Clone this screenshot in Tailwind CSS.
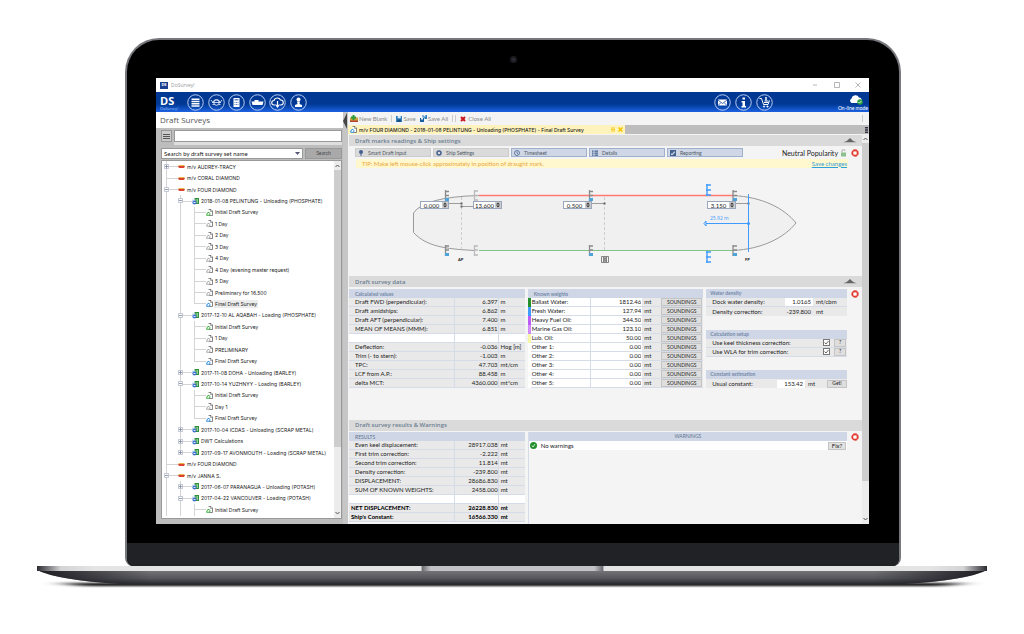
<!DOCTYPE html>
<html lang="en">
<head>
    <meta charset="UTF-8">
    <meta name="viewport" content="width=device-width, initial-scale=1.0">
    <title>DoSurvey!</title>
    <script src="https://cdn.jsdelivr.net/npm/@tailwindcss/browser@4"></script>
</head>
<body class="min-h-screen bg-white pt-[38px] pr-9 pl-[37px] font-['Lato','Noto_Sans',sans-serif] text-[5px] leading-[8px] text-[#222]">
    <!-- Shared icons -->
    <svg class="hidden">
        <symbol id="i-ship" viewBox="0 0 14 14">
            <path d="M1 4h12v3H1z" fill="#e9b44c" /><path d="M0 6h14l-2 4H2z" fill="#d9432f" />
        </symbol>
        <symbol id="i-set" viewBox="0 0 14 14">
            <path d="M5 0h9v12H5z" fill="#2f8f3a" /><path d="M9 2h3v8H9z" fill="#8fd08f" />
            <path d="M0 3h7v8H0z" fill="#c9dcf5" /><circle cx="5" cy="9" r="4" fill="#3d6fc9" /><path d="M3 8h4v2H3z" fill="#dfe9fa" />
        </symbol>
        <symbol id="i-doc" viewBox="0 0 14 14">
            <path d="M5 1h5l3 3v9H6" fill="#fff" stroke="#555" stroke-width="1.4" /><path d="M9 1v4h4" fill="none" stroke="#555" />
            <path d="M1 12.500l2-5 3-1 2 3-1 3z" fill="#fff" stroke="currentColor" stroke-width="2" />
        </symbol>
        <symbol id="i-ring" viewBox="0 0 16 16">
            <circle cx="8" cy="8" r="5.500" fill="#fff" stroke="#e23b30" stroke-width="3.600" />
            <path d="M2 2l3 3M14 2l-3 3M2 14l3-3M14 14l-3-3" stroke="#f6b5b0" stroke-width="1.500" />
        </symbol>
        <symbol id="i-disk" viewBox="0 0 14 14">
            <path d="M0 0h14v14H0z" fill="#2f7fc1" /><path d="M4 0h7v5H4z" fill="#dcebf7" /><path d="M3 8h8v6H3z" fill="#17507f" />
        </symbol>
        <symbol id="i-up" viewBox="0 0 16 6"><path d="M0 5q5-1 8-5q3 4 8 5z" fill="#666" /></symbol>
    </svg>

    <!-- Laptop lid -->
    <div class="mr-[87px] ml-[88px] overflow-hidden rounded-t-[34px] rounded-b-lg border-2 border-b-0 border-[#77787c] bg-black">
        <div class="flex h-[38px] items-center justify-center">
            <span class="size-[7px] rounded-full border-2 border-[#1c1c20] bg-[#2c2f38]"></span>
        </div>

        <div class="mr-[30px] ml-[29px] flex aspect-[8/5] flex-col overflow-hidden bg-[#f4f4f4]">
            <!-- Title bar -->
            <div class="flex h-[14px] shrink-0 items-center gap-[3px] bg-white px-1 font-['Open_Sans',sans-serif] text-[5px] text-[#999]">
                <span class="grid h-[7px] w-2 place-items-center bg-[#1c3f8f] text-[4px] leading-none font-bold text-white">DS</span>
                DoSurvey!
                <div class="ml-auto flex w-[53px] justify-between pr-1">
                    <svg class="size-[6px]" viewBox="0 0 6 6" stroke="#999" stroke-width=".7"><path d="M1 3h4" /></svg>
                    <svg class="size-[6px]" viewBox="0 0 6 6" fill="none" stroke="#999" stroke-width=".7"><path d="M.5.5h5v5h-5z" /></svg>
                    <svg class="size-[6px]" viewBox="0 0 6 6" stroke="#999" stroke-width=".7"><path d="M.5.5l5 5M5.500 .5l-5 5" /></svg>
                </div>
            </div>

            <!-- Main toolbar -->
            <header class="flex h-5 shrink-0 items-center bg-linear-to-b from-[#003894] from-60% to-[#1d62e2] pl-1 text-white">
                <div class="w-[27px]">
                    <div class="font-['Open_Sans',sans-serif] text-[11px] leading-[13px] font-bold">DS</div>
                    <div class="text-[4px] leading-[4px] text-[#8fb4f5]">DoSurvey!</div>
                </div>
                <nav class="flex w-[120px] justify-between">
                    <button aria-label="Menu"><svg class="size-[17px]" viewBox="0 0 34 34" fill="none" stroke="#fff"><circle cx="17" cy="17" r="15.500" stroke="#b9cdf2" stroke-width="2" /><path d="M9 10.500h16M9 15h16M9 19.500h16M9 24h16" stroke-width="2.600" /></svg></button>
                    <button aria-label="Draft"><svg class="size-[17px]" viewBox="0 0 34 34" fill="none" stroke="#dfe8fa"><circle cx="17" cy="17" r="15.500" stroke="#b9cdf2" stroke-width="2" /><circle cx="17" cy="17" r="5.500" stroke-width="2" /><path d="M6 12l4 5 3-5h8l3 5 4-5M8 17h18M9 21h3M22 21h3" stroke-width="1.700" /></svg></button>
                    <button aria-label="Calculator"><svg class="size-[17px]" viewBox="0 0 34 34"><circle cx="17" cy="17" r="15.500" fill="none" stroke="#b9cdf2" stroke-width="2" /><path d="M11 8h12v18H11z" fill="#fff" /><path d="M13 10h8v3h-8zM13 16h2v2h-2zM16 16h2v2h-2zM19 16h2v2h-2zM13 20h2v2h-2zM16 20h2v2h-2zM19 20h2v2h-2z" fill="#6a8cc9" /></svg></button>
                    <button aria-label="Vessels"><svg class="size-[17px]" viewBox="0 0 34 34"><circle cx="17" cy="17" r="15.500" fill="none" stroke="#b9cdf2" stroke-width="2" /><path d="M5 15h6v-3h8v3h10l-2 7H7z" fill="#fff" /></svg></button>
                    <button aria-label="Cloud"><svg class="size-[17px]" viewBox="0 0 34 34" fill="none" stroke="#fff"><circle cx="17" cy="17" r="15.500" stroke="#b9cdf2" stroke-width="2" /><path d="M12 22h-2a4.500 4.500 0 010-9 7 7 0 0113-1 5 5 0 011 10h-2" stroke-width="2.200" /><path d="M17 14v11M13 21l4 5 4-5" stroke-width="2.400" /></svg></button>
                    <button aria-label="User"><svg class="size-[17px]" viewBox="0 0 34 34"><circle cx="17" cy="17" r="15.500" fill="none" stroke="#b9cdf2" stroke-width="2" /><circle cx="17" cy="11" r="4" fill="#fff" /><path d="M14 15h6l-1 5 5 2v4H10v-4l5-2z" fill="#fff" /></svg></button>
                </nav>
                <div class="ml-auto flex w-[59px] justify-between">
                    <button aria-label="Mail"><svg class="size-[17px]" viewBox="0 0 34 34"><circle cx="17" cy="17" r="15.500" fill="none" stroke="#b9cdf2" stroke-width="2" /><path d="M8 11h18v12H8z" fill="#fff" /><path d="M8 12l9 7 9-7M8 23l6-6M26 23l-6-6" fill="none" stroke="#0c3f9f" stroke-width="1.500" /></svg></button>
                    <button aria-label="Info"><svg class="size-[17px]" viewBox="0 0 34 34"><circle cx="17" cy="17" r="15.500" fill="none" stroke="#b9cdf2" stroke-width="2" /><path d="M15 7h5v4h-5zM13 14h7v10h2v3h-9v-3h2v-7h-2z" fill="#fff" /></svg></button>
                    <button aria-label="Cart"><svg class="size-[17px]" viewBox="0 0 34 34" fill="none" stroke="#fff"><circle cx="17" cy="17" r="15.500" stroke="#b9cdf2" stroke-width="2" /><path d="M7 9h4l4 12h9l3-8M17 14h8M16 17h9" stroke-width="2" /><path d="M20 6v7" stroke-width="3" /><circle cx="16" cy="25" r="1.500" fill="#fff" /><circle cx="23" cy="25" r="1.500" fill="#fff" /></svg></button>
                </div>
                <div class="ml-[60px] flex w-9 flex-col items-end pt-px pr-px">
                    <svg class="mr-[5px] h-[10px] w-[14px]" viewBox="0 0 28 20"><path d="M5 16a5 5 0 010-9 8 8 0 0115-2 6 6 0 013 11z" fill="#fff" /><circle cx="22" cy="14" r="5.500" fill="#2ea043" /><path d="M19 14l2 2 4-4" fill="none" stroke="#fff" stroke-width="1.500" /></svg>
                    <span class="leading-[6px] whitespace-nowrap">On-line mode</span>
                </div>
            </header>

            <div class="flex min-h-0 flex-1">
                <!-- Draft surveys -->
                <aside class="flex w-[187px] shrink-0 flex-col bg-[#bdbdbd]">
                    <h2 class="h-4 shrink-0 bg-white pl-1 font-['Open_Sans',sans-serif] text-[8px] leading-4 text-[#555]">Draft Surveys</h2>
                    <div class="flex min-h-0 flex-1 flex-col pt-[2px] pr-px pb-[5px] pl-[5px]">
                        <div class="flex gap-[2px]">
                            <button aria-label="Filter" class="grid h-3 w-[11px] place-items-center border border-[#999] bg-[#ccc]">
                                <svg class="size-[7px]" viewBox="0 0 7 7" stroke="#555"><path d="M0 1.500h7M0 3.500h7M0 5.500h7" stroke-width="1.100" /></svg>
                            </button>
                            <div class="flex-1">
                                <input type="text" aria-label="Filter text" class="block h-3 w-full border border-[#999] bg-white px-1">
                                <div class="h-[3px] bg-[#dedede]"></div>
                            </div>
                        </div>
                        <div class="mt-[3px] flex gap-[2px]">
                            <div class="relative flex-1">
                                <select aria-label="Search by" class="block h-[11px] w-full appearance-none border border-[#999] bg-white pl-[2px] text-[6px] leading-[9px] text-[#222]">
                                    <option>Search by draft survey set name</option>
                                </select>
                                <svg class="absolute top-1 right-[3px] h-[3px] w-[5px]" viewBox="0 0 5 3"><path d="M0 0h5L2.500 3z" fill="#557" /></svg>
                            </div>
                            <button class="h-[11px] w-[37px] border border-[#999] bg-[#a9a9a9] leading-none text-[#444]">Search</button>
                        </div>
                        <div class="mt-px flex min-h-0 flex-1 border border-[#999] bg-white">
                            <div id="tree" class="flex flex-1 flex-col overflow-hidden pb-[2px] pl-1 font-['Inter',sans-serif] whitespace-nowrap"></div>
                            <div class="flex w-[7px] flex-col items-center bg-[#ececec]">
                                <svg class="h-[9px] w-[5px]" viewBox="0 0 5 9" fill="none" stroke="#555"><path d="M.5 6l2-2 2 2" /></svg>
                                <div class="h-[277px] w-full bg-[#cdcdcd]"></div>
                                <svg class="mt-auto h-[9px] w-[5px]" viewBox="0 0 5 9" fill="none" stroke="#555"><path d="M.5 3l2 2 2-2" /></svg>
                            </div>
                        </div>
                    </div>
                </aside>
                <div class="w-[5px] shrink-0 bg-[#c6c6c6]">
                    <svg class="h-[18px] w-[4px]" viewBox="0 0 4 18"><path d="M4 1v16L0 9z" fill="#444" /></svg>
                </div>

                <!-- Opened survey -->
                <main class="flex min-w-0 flex-1 flex-col">
                    <div class="flex h-[13px] shrink-0 items-center gap-1 pr-[6px] pl-[2px] text-[6px] text-[#8a8a8a]">
                        <button class="flex items-center gap-px"><svg class="h-[7px] w-2" viewBox="0 0 16 14"><path d="M0 5h16v9H0z" fill="#c9a23a" /><path d="M0 11h16v3H0z" fill="#b5402c" /><path d="M5 0h4v3h3v4H9v3H5V7H2V3h3z" fill="#2e9a3a" /></svg>New Blank</button>
                        <span class="h-[7px] w-px bg-[#ccc]"></span>
                        <button class="flex items-center gap-px"><svg class="size-[6px]"><use href="#i-disk" /></svg>Save</button>
                        <button class="flex items-center gap-px"><svg class="size-[7px]" viewBox="0 0 14 14"><path d="M5 0h9v8H9v-3H5z" fill="#2f7fc1" /><path d="M0 6h8v8H0z" fill="#17609f" /><path d="M2 6h4v3H2zM7 0h4v3H7z" fill="#e5f0fa" /></svg>Save All</button>
                        <span class="h-[7px] w-1 border-x border-[#ccc]"></span>
                        <button class="flex items-center gap-[2px]"><svg class="size-[6px]" viewBox="0 0 6 6"><path d="M1 1l4 4M5 1L1 5" stroke="#c8171e" stroke-width="2" /></svg>Close All</button>
                        <span class="ml-auto h-[7px] w-px bg-[#ccc]"></span>
                    </div>

                    <div class="flex h-[9px] shrink-0 items-center justify-between bg-[#bdbdbd] pr-px">
                        <div class="flex h-full w-[277px] items-center bg-[#fff3bd] pr-[2px] pl-[2px]">
                            <svg class="mr-[2px] size-[7px] text-[#2f8fe0]"><use href="#i-doc" /></svg>
                            <span class="font-['Inter',sans-serif] font-medium whitespace-nowrap">m/v FOUR DIAMOND - 2018-01-08 PELINTUNG - Unloading (PHOSPHATE) - Final Draft Survey</span>
                            <svg class="ml-auto h-[5px] w-3" viewBox="0 0 12 5" stroke="#f5c400"><path d="M0 1h4M0 2.500h4M0 4h4" stroke-width=".8" /><path d="M7.500 .5l4 4M11.500 .5l-4 4" stroke-width="1.500" /></svg>
                        </div>
                        <svg class="h-[6px] w-[3px]" viewBox="0 0 3 6" fill="#334"><path d="M0 0h3v1.500H0zM0 2.200h3v1.500H0zM0 4.400h3V6H0z" /></svg>
                    </div>

                    <div class="flex min-h-0 flex-1">
                        <div class="min-w-0 flex-1 overflow-hidden">
                            <section>
                                <h3 class="ml-px flex h-3 items-center justify-between border-t border-[#f4f4f4] bg-[#dadada] pr-1 pl-[6px] font-['Open_Sans',sans-serif] text-[6px] font-semibold text-[#6d7f92]">Draft marks readings &amp; Ship settings<svg class="h-[5px] w-4"><use href="#i-up" /></svg></h3>
                                <div class="mt-[2px] flex h-[9px] items-center gap-[2px] pr-[3px] pl-[7px] text-[#4d5763]">
                                    <button class="flex h-full w-[76px] items-center gap-1 border border-[#ccc] bg-[#dadada] pl-[2px]"><svg class="size-[6px]" viewBox="0 0 12 12" fill="#44608f"><circle cx="6" cy="4" r="4" /><path d="M5 7h2v5H5z" /></svg>Smart Draft Input</button>
                                    <button class="flex h-full w-[76px] items-center gap-1 border border-[#ccc] bg-[#dadada] pl-[2px]"><svg class="size-[6px]" viewBox="0 0 12 12"><circle cx="6" cy="6" r="4" fill="#dadada" stroke="#44608f" stroke-width="3" /></svg>Ship Settings</button>
                                    <button class="flex h-full w-[76px] items-center gap-1 border border-[#9fb0cd] bg-[#cfd7e6] pl-[2px]"><svg class="size-[6px]" viewBox="0 0 12 12" fill="none" stroke="#44608f" stroke-width="1.500"><circle cx="6" cy="6" r="5" /><path d="M6 3v3l2 2" /></svg>Timesheet</button>
                                    <button class="flex h-full w-[76px] items-center gap-1 border border-[#9fb0cd] bg-[#cfd7e6] pl-[2px]"><svg class="size-[6px]" viewBox="0 0 12 12" stroke="#44608f" stroke-width="2.500"><path d="M0 2h3M5 2h7M0 6h3M5 6h7M0 10h3M5 10h7" /></svg>Details</button>
                                    <button class="flex h-full w-[76px] items-center gap-1 border border-[#9fb0cd] bg-[#cfd7e6] pl-[2px]"><svg class="size-[6px]" viewBox="0 0 12 12"><path d="M0 0h12v12H0z" fill="#44608f" /><path d="M2 10V6l2 2 4-5h2v2L5 10z" fill="#cfd7e6" /></svg>Reporting</button>
                                    <span class="ml-auto text-[7px] whitespace-nowrap text-[#222]">Neutral Popularity</span>
                                    <svg class="h-2 w-[7px]" viewBox="0 0 14 16"><path d="M4 7V4a3 3 0 016 0" fill="none" stroke="#aaa" stroke-width="2" /><path d="M2 7h10v8H2z" fill="#8cc08c" /></svg>
                                    <svg class="ml-[2px] size-2"><use href="#i-ring" /></svg>
                                </div>
                                <div class="mt-[2px] mr-[14px] ml-2 flex h-[9px] items-center justify-between bg-[#fff8cf] pr-px pl-[6px] text-[6px] text-[#e9a63a]">
                                    TIP: Make left mouse-click approximately in position of draught mark.
                                    <a href="#" class="text-[#2f9fd8] underline">Save changes</a>
                                </div>

                                <!-- Ship plan -->
                                <div class="relative h-[108px]">
                                    <svg class="h-[108px] w-[514px]" viewBox="348 168 514 108" fill="none">
                                        <path d="M413.500 213Q424 197 479 195.500H733C762 197 784 208 796 223C784 238 762 249 733 250.500H475C444 249 426 246 413.500 232.500Z" fill="#f0f0f0" />
                                        <path d="M733 195.500C762 197 784 208 796 223C784 238 762 249 733 250.500M475 250.500C444 249 426 246 413.500 232.500V213Q424 197 479 195.500" stroke="#999" />
                                        <path d="M479 195.500H733" stroke="#ff7a72" stroke-width="1.500" /><path d="M479 250.500H733" stroke="#7fc486" stroke-width="1.200" />
                                        <path d="M461.500 197V250M604.500 197V250" stroke="#c4c4c4" stroke-width=".8" stroke-dasharray="3 2" />
                                        <g stroke="#888" stroke-width=".8"><path d="M448 203.500h13M461 206.500h13M592 203.500h12M735 203.500h13" /></g>
                                        <g fill="#666"><path d="M460.500 202.500h2v2h-2zM460.500 205.500h2v2h-2zM603.500 202.500h2v2h-2zM747.500 202.500h2v2h-2z" /></g>
                                        <g stroke="#8a8a8a"><path d="M445.500 190v11M445 191.500h4M445 195.500h4M589.500 190v11M589 191.500h4M589 195.500h4M733 190v11M733 191.500h4M733 195.500h4M445.500 245v11M445 246h4M445 250h4M589.500 245v11M589 246h4M589 250h4M733 245v11M733 246h4M733 250h4" stroke-width="1.300" /></g>
                                        <g stroke="#bbb"><path d="M474.500 190v11M474 191h4M474 195.500h4M474 200h4M474.500 245v11M474 246h4M474 250h4M474 255h4" stroke-width="1.300" /></g>
                                        <path d="M445 198h4v3h-4zM589 198h4v3h-4zM733 198h4v3h-4zM445 253h4v3h-4zM589 253h4v3h-4zM733 253h4v3h-4z" fill="#4ea3d8" />
                                        <g stroke="#3f9bff"><path d="M707 184v12M706 185h5M706 190h5M706 195h5M707 251v12M706 252h5M706 257h5M706 262h5" stroke-width="1.400" /><path d="M748.500 194v58M706 223.500h42M706 221l-2 2.500 2 2.500z" /></g>
                                        <circle cx="748.500" cy="223.500" r="1.500" fill="#3f9bff" />
                                        <path d="M601.500 256.500h7v6h-7zM603.500 257v5M606.500 257v5M604 257l2 5M606 257l-2 5" stroke="#555" stroke-width=".7" />
                                        <text x="710" y="220" font-size="5" fill="#3f9bff" class="font-['Open_Sans',sans-serif]">25.92 m</text>
                                        <text x="458" y="261" font-size="4" font-weight="bold" fill="#111">AP</text>
                                        <text x="745" y="261" font-size="4" font-weight="bold" fill="#111">FP</text>
                                    </svg>
                                    <div id="marks"></div>
                                </div>
                            </section>

                            <section>
                                <h3 class="ml-px flex h-[11px] items-center justify-between bg-[#dadada] pr-1 pl-[6px] font-['Open_Sans',sans-serif] text-[6px] font-semibold text-[#6d7f92]">Draft survey data<svg class="h-[5px] w-4"><use href="#i-up" /></svg></h3>
                                <div class="mt-[2px] flex gap-1 pr-[3px]">
                                    <div class="grid flex-1 grid-cols-[176fr_176fr_141fr] items-start gap-[3px] pl-px">
                                        <table class="w-full table-fixed border-separate border-spacing-0">
                                            <colgroup><col><col class="w-[44px]"><col class="w-[26px]"></colgroup>
                                            <thead><tr class="h-[9px]"><th colspan="3" class="bg-[#cfd6e6] pl-[6px] text-left font-bold text-[#7488a8]">Calculated values</th></tr></thead>
                                            <tbody id="calculated"></tbody>
                                        </table>
                                        <table class="w-full table-fixed border-separate border-spacing-0">
                                            <colgroup><col class="w-[3px]"><col><col class="w-[51px]"><col class="w-[18px]"><col class="w-[43px]"></colgroup>
                                            <thead><tr class="h-[9px]"><th colspan="5" class="bg-[#cfd6e6] pl-[6px] text-left font-bold text-[#7488a8]">Known weights</th></tr></thead>
                                            <tbody id="weights"></tbody>
                                        </table>
                                        <div class="flex h-[99px] flex-col justify-between">
                                            <div>
                                                <h4 class="h-[9px] bg-[#cfd6e6] pl-1 font-bold text-[#7488a8]">Water density</h4>
                                                <div class="flex h-[9px] items-center border-b border-[#d6dbe8] bg-[#e9e9e9] pl-[6px] text-[6px]">
                                                    <label for="dock" class="flex-1">Dock water density:</label>
                                                    <input id="dock" value="1.0165" class="h-2 w-7 bg-white pr-[2px] text-right">
                                                    <span class="w-[34px] pl-[3px]">mt/cbm</span>
                                                </div>
                                                <div class="flex h-[9px] items-center bg-[#e9e9e9] pl-[6px] text-[6px]">
                                                    <span class="flex-1">Density correction:</span><span class="w-7 pr-[2px] text-right">-239.800</span><span class="w-[34px] pl-[3px]">mt</span>
                                                </div>
                                            </div>
                                            <div>
                                                <h4 class="h-[9px] bg-[#cfd6e6] pl-1 font-bold text-[#7488a8]">Calculation setup</h4>
                                                <div id="setup"></div>
                                            </div>
                                            <div>
                                                <h4 class="h-[9px] bg-[#cfd6e6] pl-1 font-bold text-[#7488a8]">Constant estimation</h4>
                                                <div class="flex h-[9px] items-center bg-[#e9e9e9] pl-[6px] text-[6px]">
                                                    <label for="constant" class="flex-1">Usual constant:</label>
                                                    <input id="constant" value="153.42" class="h-2 w-7 bg-white pr-[2px] text-right">
                                                    <span class="w-[22px] pl-[3px]">mt</span>
                                                    <button class="h-2 w-5 border border-[#c4c4c4] bg-[#dedede] text-[5px] leading-none">Get!</button>
                                                </div>
                                            </div>
                                        </div>
                                    </div>
                                    <svg class="mt-px size-2"><use href="#i-ring" /></svg>
                                </div>
                            </section>

                            <section class="mt-8">
                                <h3 class="ml-px h-[11px] bg-[#dadada] pl-[6px] font-['Open_Sans',sans-serif] text-[6px] leading-[11px] font-semibold text-[#6d7f92]">Draft survey results &amp; Warnings</h3>
                                <div class="mt-px flex gap-1 pr-[3px]">
                                    <div class="grid flex-1 grid-cols-[176fr_320fr] items-start gap-[3px] pl-px">
                                        <table class="w-full table-fixed border-separate border-spacing-0">
                                            <colgroup><col><col class="w-[44px]"><col class="w-[26px]"></colgroup>
                                            <thead><tr class="h-[9px]"><th colspan="3" class="bg-[#cfd6e6] pl-[6px] text-left font-normal text-[#61738f]">RESULTS</th></tr></thead>
                                            <tbody id="results"></tbody>
                                        </table>
                                        <div class="h-[92px] border-l border-[#d6dbe8]">
                                            <h4 class="h-[9px] bg-[#cfd6e6] text-center text-[#61738f]">WARNINGS</h4>
                                            <div class="flex h-[9px] items-center bg-white pr-px pl-px text-[6px]">
                                                <svg class="mr-1 size-[7px]" viewBox="0 0 14 14"><circle cx="7" cy="7" r="7" fill="#23902c" /><path d="M4 7l2 3 4-6" fill="none" stroke="#fff" stroke-width="1.500" /></svg>
                                                No warnings
                                                <button class="ml-auto h-2 w-[18px] border border-[#c4c4c4] bg-[#e2e2e2] leading-none">Fix?</button>
                                            </div>
                                        </div>
                                    </div>
                                    <svg class="mt-px size-2"><use href="#i-ring" /></svg>
                                </div>
                            </section>
                        </div>
                        <div class="flex w-[7px] shrink-0 flex-col items-center bg-[#ececec]">
                            <svg class="h-[9px] w-[5px]" viewBox="0 0 5 9" fill="none" stroke="#555"><path d="M.5 6l2-2 2 2" /></svg>
                            <div class="h-[338px] w-full bg-[#cdcdcd]"></div>
                            <svg class="mt-auto h-[9px] w-[5px]" viewBox="0 0 5 9" fill="none" stroke="#555"><path d="M.5 3l2 2 2-2" /></svg>
                        </div>
                    </div>
                </main>
            </div>
        </div>

        <div class="mt-[19px] h-[23px] bg-[#202226]"></div>
    </div>

    <!-- Laptop base -->
    <svg class="h-6 w-full overflow-visible" viewBox="0 0 952 24" preserveAspectRatio="none">
        <defs>
            <linearGradient id="body" x1="0" y1="0" x2="0" y2="1"><stop offset="0" stop-color="#77777b" /><stop offset=".6" stop-color="#55555b" /><stop offset="1" stop-color="#2a2a31" /></linearGradient>
            <linearGradient id="deck"><stop offset="0" stop-color="#2a2a30" /><stop offset=".025" stop-color="#d4d4d6" /><stop offset=".06" stop-color="#e4e4e5" /><stop offset=".94" stop-color="#e4e4e5" /><stop offset=".975" stop-color="#d4d4d6" /><stop offset="1" stop-color="#2a2a30" /></linearGradient>
            <linearGradient id="sides"><stop offset="0" stop-color="#1b1b21" /><stop offset=".12" stop-color="#1b1b21" stop-opacity="0" /><stop offset=".88" stop-color="#1b1b21" stop-opacity="0" /><stop offset="1" stop-color="#1b1b21" /></linearGradient>
            <linearGradient id="notch"><stop offset="0" stop-color="#66666c" /><stop offset=".05" stop-color="#c3c2c7" /><stop offset=".95" stop-color="#c3c2c7" /><stop offset="1" stop-color="#66666c" /></linearGradient>
            <filter id="soft" x="-5%" y="-100%" width="110%" height="300%"><feGaussianBlur stdDeviation="10 1" /></filter>
        </defs>
        <path d="M20 17H932L905 20H47z" fill="#000" filter="url(#soft)" />
        <path d="M0 4Q20 14 84 18H868Q932 14 951 4z" fill="url(#body)" />
        <path d="M0 4Q20 14 84 18H868Q932 14 951 4z" fill="url(#sides)" />
        <path d="M0 0H951V5H0z" fill="url(#deck)" />
        <path d="M385 0H567V5H385z" fill="url(#notch)" />
    </svg>

    <script>
        // level, label, icon, expander state (+ / -), last child, selected
        const tree = [
            [0, 'm/v AUDREY-TRACY', 'ship', '+'],
            [0, 'm/v CORAL DIAMOND', 'ship'],
            [0, 'm/v FOUR DIAMOND', 'ship', '-'],
            [1, '2018-01-08 PELINTUNG - Unloading (PHOSPHATE)', 'set', '-'],
            [2, 'Initial Draft Survey', 'initial'],
            [2, '1 Day', 'day'],
            [2, '2 Day', 'day'],
            [2, '3 Day', 'day'],
            [2, '4 Day', 'day'],
            [2, '4 Day (evening master request)', 'day'],
            [2, '5 Day', 'day'],
            [2, 'Preliminary for 16.500', 'day'],
            [2, 'Final Draft Survey', 'final', '', true, true],
            [1, '2017-12-10 AL AQABAH - Loading (PHOSPHATE)', 'set', '-'],
            [2, 'Initial Draft Survey', 'initial'],
            [2, '1 Day', 'day'],
            [2, 'PRELIMINARY', 'day'],
            [2, 'Final Draft Survey', 'final', '', true],
            [1, '2017-11-08 DOHA - Unloading (BARLEY)', 'set', '+'],
            [1, '2017-10-14 YUZHNYY - Loading (BARLEY)', 'set', '-'],
            [2, 'Initial Draft Survey', 'initial'],
            [2, 'Day 1', 'day'],
            [2, 'Final Draft Survey', 'final', '', true],
            [1, '2017-10-04 ICDAS - Unloading (SCRAP METAL)', 'set', '+'],
            [1, 'DWT Calculations', 'set', '+'],
            [1, '2017-09-17 AVONMOUTH - Loading (SCRAP METAL)', 'set', '+', true],
            [0, 'm/v FOUR DIAMOND', 'ship'],
            [0, 'm/v JANNA S.', 'ship', '-'],
            [1, '2017-06-07 PARANAGUA - Unloading (POTASH)', 'set', '+'],
            [1, '2017-04-22 VANCOUVER - Loading (POTASH)', 'set', '-'],
            [2, 'Initial Draft Survey', 'initial'],
        ];
        const icons = {
            ship: '<svg class="size-[7px]"><use href="#i-ship" /></svg>',
            set: '<svg class="size-[7px]"><use href="#i-set" /></svg>',
            initial: '<svg class="size-[7px] text-[#3fae3f]"><use href="#i-doc" /></svg>',
            day: '<svg class="size-[7px] text-[#aaa]"><use href="#i-doc" /></svg>',
            final: '<svg class="size-[7px] text-[#2f8fe0]"><use href="#i-doc" /></svg>',
        };
        document.getElementById('tree').innerHTML = tree.map(([level, label, icon, state, last, selected]) => `
            <div class="flex min-h-0 flex-1 items-center">
                ${'<span class="w-[14px] self-stretch border-l border-[#d4d4d4]"></span>'.repeat(level)}
                <span class="relative flex w-3 flex-col self-stretch">
                    <span class="flex-1 border-b border-l border-[#d4d4d4]"></span>
                    <span class="${last ? 'flex-1' : 'flex-1 border-l border-[#d4d4d4]'}"></span>
                    ${state ? `<svg class="absolute top-[3px] left-[-2px] size-[5px]" viewBox="0 0 5 5"><path d="M.5.5h4v4h-4z" fill="#fff" stroke="#a9b2c1" stroke-width=".7" /><path d="${state === '+' ? 'M1 2.500h3M2.500 1v3' : 'M1 2.500h3'}" stroke="#6b7690" stroke-width=".7" /></svg>` : ''}
                </span>
                ${icons[icon]}
                <span class="${selected ? 'ml-px bg-[#ececec] px-px' : 'ml-[2px]'}">${label}</span>
            </div>`).join('');

        const sheetRow = ([label, value, unit, bold]) => {
            if (!label) {
                return '<tr class="h-[9px]"><td class="border-r border-b border-[#d6dbe8] bg-white"></td><td class="border-r border-b border-[#d6dbe8] bg-white"></td><td class="border-b border-[#d6dbe8] bg-white"></td></tr>';
            }
            return `<tr class="${bold ? 'h-[9px] text-[6px] font-bold text-black' : 'h-[9px] text-[6px]'}">
                <td class="${bold ? 'border-r border-b border-[#d6dbe8] bg-[#e9e9e9] pl-[2px]' : 'border-r border-b border-[#d6dbe8] bg-[#e9e9e9] pl-[6px]'}">${label}</td>
                <td class="border-r border-b border-[#d6dbe8] bg-[#e9e9e9] text-right">${value}</td>
                <td class="border-b border-[#d6dbe8] bg-[#e9e9e9] pl-[2px] whitespace-nowrap">${unit}</td>
            </tr>`;
        };
        document.getElementById('calculated').innerHTML = [
            ['Draft FWD (perpendicular):', '6.397', 'm'],
            ['Draft amidships:', '6.862', 'm'],
            ['Draft AFT (perpendicular):', '7.400', 'm'],
            ['MEAN OF MEANS (MMM):', '6.851', 'm'],
            [],
            ['Deflection:', '-0.036', 'Hog [m]'],
            ['Trim (- to stern):', '-1.003', 'm'],
            ['TPC:', '47.703', 'mt/cm'],
            ['LCF from A.P.:', '88.458', 'm'],
            ['delta MCT:', '4360.000', 'mt*cm'],
        ].map(sheetRow).join('');
        document.getElementById('results').innerHTML = [
            ['Even keel displacement:', '28917.038', 'mt'],
            ['First trim correction:', '-2.222', 'mt'],
            ['Second trim correction:', '11.814', 'mt'],
            ['Density correction:', '-239.800', 'mt'],
            ['DISPLACEMENT:', '28686.830', 'mt'],
            ['SUM OF KNOWN WEIGHTS:', '2458.000', 'mt'],
            [],
            ['NET DISPLACEMENT:', '26228.830', 'mt', true],
            ["Ship's Constant:", '16566.330', 'mt', true],
        ].map(sheetRow).join('');

        document.getElementById('weights').innerHTML = [
            ['Ballast Water:', '1812.46', '#23902c'],
            ['Fresh Water:', '127.94', '#3f9bff'],
            ['Heavy Fuel Oil:', '344.50', '#b95cf5'],
            ['Marine Gas Oil:', '123.10', '#d08cfa'],
            ['Lub. Oil:', '50.00', '#f7f5a8'],
            ['Other 1:', '0.00', '#fff'],
            ['Other 2:', '0.00', '#fff'],
            ['Other 3:', '0.00', '#fff'],
            ['Other 4:', '0.00', '#fff'],
            ['Other 5:', '0.00', '#fff'],
        ].map(([label, value, color], i) => `<tr class="h-[9px] text-[6px]">
                <td style="background:${color}"></td>
                <td class="border-r border-b border-[#d6dbe8] bg-white pl-px"><label for="w${i}">${label}</label></td>
                <td class="border-b border-[#d6dbe8] bg-white"><input id="w${i}" value="${value}" class="block h-2 w-full pr-px text-right"></td>
                <td class="border-b border-[#d6dbe8] bg-[#e9e9e9] pl-[2px]">mt</td>
                <td class="border-b border-[#d6dbe8] bg-[#e9e9e9] px-px"><button class="block h-2 w-full border border-[#c4c4c4] bg-[#dedede] text-[5px] leading-none">SOUNDINGS</button></td>
            </tr>`).join('');

        document.getElementById('setup').innerHTML = ['Use keel thickness correction:', 'Use WLA for trim correction:'].map((label, i) => `
            <div class="flex h-[9px] items-center border-b border-[#d6dbe8] bg-[#e9e9e9] pl-[6px] text-[6px]">
                <label for="s${i}" class="flex-1">${label}</label>
                <span class="mr-1 grid">
                    <input id="s${i}" type="checkbox" checked class="col-start-1 row-start-1 size-[7px] appearance-none border border-[#777] bg-white">
                    <svg class="pointer-events-none z-10 col-start-1 row-start-1 size-[7px]" viewBox="0 0 7 7" fill="none" stroke="#444" stroke-width=".8"><path d="M1.500 3.500l1.500 1.500 2.500-3" /></svg>
                </span>
                <button class="mr-px h-2 w-3 border border-[#c4c4c4] bg-[#dedede] text-[5px] leading-none">?</button>
            </div>`).join('');

        // draught mark distances, pinned on the ship plan
        document.getElementById('marks').innerHTML = [['0.000', 72], ['13.600', 125], ['0.500', 215], ['3.150', 359]].map(([value, left]) => `
            <div class="absolute top-[33px] flex h-2 w-[29px] border border-[#9aa6bb] bg-white" style="left:${left}px">
                <input aria-label="Distance" value="${value}" class="min-w-0 flex-1 text-center text-[6px] leading-[6px]">
                <svg class="h-full w-[6px] shrink-0 bg-[#ccc]" viewBox="0 0 6 6"><path d="M1 2.500l2-2 2 2zM1 3.500l2 2 2-2z" fill="#333" /></svg>
            </div>`).join('');
    </script>
</body>
</html>
